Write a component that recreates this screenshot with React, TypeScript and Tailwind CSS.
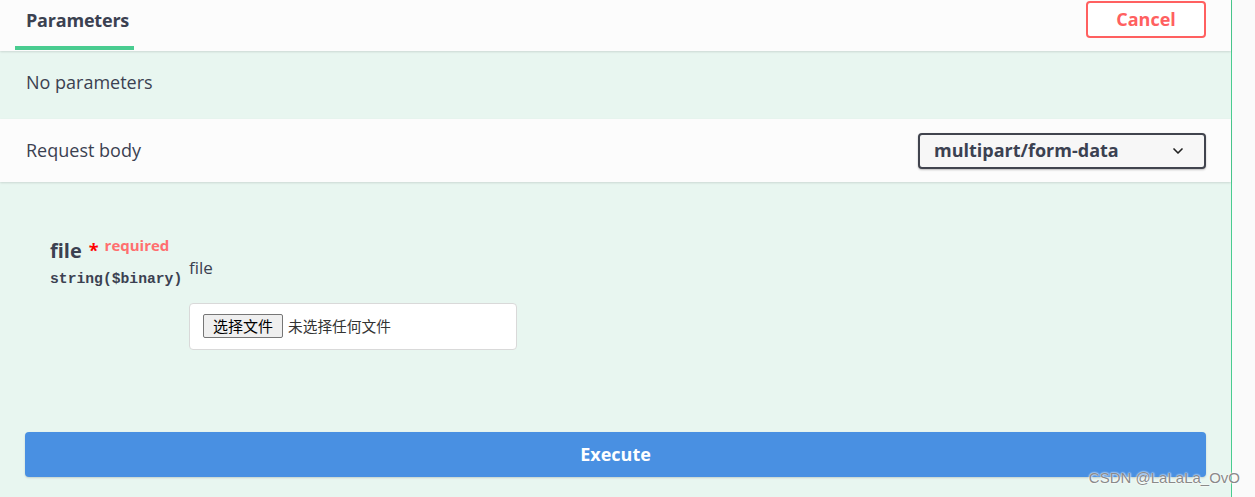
import { ChevronDown } from "lucide-react";

const sans = "font-['Open_Sans','Noto_Sans_CJK_SC',sans-serif]";

export default function App() {
  return (
    <div className={`flex h-[497px] w-[1255px] overflow-hidden bg-[#fafafa] ${sans}`}>
      {/* ── MAIN PANEL ── */}
      <div className="relative flex w-[1232px] flex-col border-r border-[#49cc90] bg-[#e8f6f0]">
        {/* Tab header */}
        <div className="relative z-10 flex h-[51px] items-start justify-between bg-[#fcfcfc] pr-[25px] shadow-[0_1px_2px_rgba(0,0,0,0.12)]">
          <div className="ml-[15px] flex h-[50px] w-[119px] flex-col justify-between">
            <span className="pl-[11px] pt-[7px] text-[18px] font-bold tracking-[-0.2px] text-[#3b4151]">Parameters</span>
            <div className="h-[4px] w-full bg-[#49cc90]" />
          </div>
          <button className="mt-[1px] flex h-[37px] w-[120px] items-center justify-center rounded-[4px] border-2 border-[#ff6060] bg-white text-[18px] font-bold text-[#ff6060]">
            Cancel
          </button>
        </div>

        {/* No parameters */}
        <div className="flex h-[68px] items-start px-[26px] pt-[18px]">
          <span className="text-[18px] text-[#3b4151]">No parameters</span>
        </div>

        {/* Request body */}
        <div className="relative z-10 flex h-[63px] items-center justify-between bg-[#fcfcfc] pl-[26px] pr-[25px] shadow-[0_1px_2px_rgba(0,0,0,0.12)]">
          <span className="text-[18px] text-[#3b4151]">Request body</span>
          <div className="flex h-[36px] w-[288px] items-center justify-between rounded-[4px] border-2 border-[#41444e] bg-[#f7f7f7] pl-[14px] pr-[18px] shadow-[0_1px_2px_rgba(0,0,0,0.25)]">
            <span className="text-[18px] font-bold text-[#3b4151]">multipart/form-data</span>
            <ChevronDown size={16} strokeWidth={2.5} className="text-[#222]" />
          </div>
        </div>

        {/* Form */}
        <div className="flex flex-1 flex-col">
          <div className="flex pl-[50px] pt-[55px]">
            <div className="flex w-[139px] flex-col">
              <div className="flex items-start">
                <span className="text-[20px] font-bold leading-[28px] text-[#3b4151]">file</span>
                <span className="ml-[7px] mt-[3px] text-[18px] font-bold leading-[20px] text-[#ff0000]">*</span>
                <span className="ml-[6px] mt-[-3px] text-[15px] font-bold text-[#ff6f6f]">required</span>
              </div>
              <span className="mt-[3px] font-['Liberation_Mono',monospace] text-[14.7px] font-semibold text-[#3b4151]">
                string($binary)
              </span>
            </div>
            <div className="flex flex-col">
              <span className="mt-[18px] text-[17px] text-[#3b4151]">file</span>
              <div className="mt-[22px] flex h-[47px] w-[328px] items-center rounded-[4px] border border-[#d9d9d9] bg-white pl-[13px]">
                <span className="flex h-[24px] items-center rounded-[2px] border border-[#767676] bg-[#efefef] px-[9px] font-['Noto_Sans_CJK_SC',sans-serif] text-[15px] text-black">
                  选择文件
                </span>
                <span className="ml-[5px] font-['Noto_Sans_CJK_SC',sans-serif] text-[14.7px] text-[#333]">未选择任何文件</span>
              </div>
            </div>
          </div>

          <div className="mx-[25px] mt-auto mb-[20px]">
            <button className="flex h-[45px] w-full items-center justify-center rounded-[4px] bg-[#4990e2] text-[18px] font-bold text-white shadow-[0_1px_2px_rgba(0,0,0,0.15)]">
              Execute
            </button>
          </div>
        </div>

        {/* Watermark */}
        <span className="absolute right-[-9px] bottom-[8px] z-20 font-['Liberation_Sans',sans-serif] text-[15px] text-[#8a8a8a] [text-shadow:0_0_2px_#fff,0_0_2px_#fff]">
          CSDN @LaLaLa_OvO
        </span>
      </div>
    </div>
  );
}
